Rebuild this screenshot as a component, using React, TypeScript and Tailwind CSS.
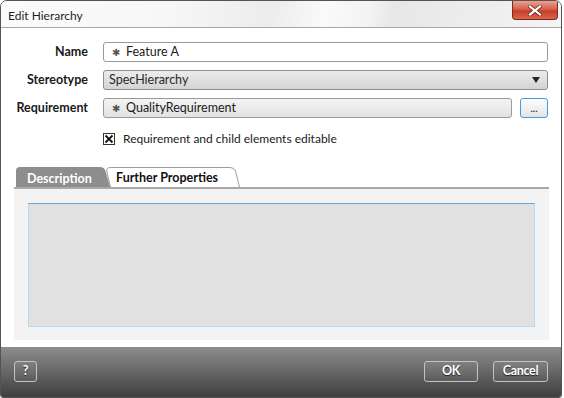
import React from "react";

const font = "font-['Lato','Liberation_Sans',sans-serif]";

function FieldLabel({ children }: { children: React.ReactNode }) {
  return (
    <div className="flex h-[20px] items-center justify-end text-[12.5px] font-bold text-[#1a1a1a]">
      {children}
    </div>
  );
}

function Star() {
  return <span className="mr-[6px] text-[10px] leading-none text-[#555]">✱</span>;
}

function TabShape({ kind }: { kind: "active" | "inactive" }) {
  if (kind === "active") {
    return (
      <svg className="absolute inset-0" width="94" height="20" viewBox="0 0 94 20">
        <path d="M0 20 V4 Q0 0 4 0 H84 Q88 0 89.5 4 L94 20 Z" fill="#8d8d8d" />
      </svg>
    );
  }
  return (
    <svg className="absolute inset-0" width="134" height="20" viewBox="0 0 134 20">
      <path d="M4.5 20 L0.8 4 Q0.5 0.5 4.5 0.5 H124 Q128 0.5 129.5 4 L133.5 20 Z" fill="#ffffff" />
      <path d="M4.5 20 L0.8 4 Q0.5 0.5 4.5 0.5 H124 Q128 0.5 129.5 4 L133.5 20" fill="none" stroke="#9d9d9d" />
    </svg>
  );
}

function FooterButton({ children, className }: { children: React.ReactNode; className?: string }) {
  return (
    <button
      className={`flex h-[21px] items-center justify-center rounded-[3px] border border-[#c4c4c4] bg-[linear-gradient(#ffffff14,#ffffff05)] text-[12.5px] font-bold tracking-[-0.3px] text-white [text-shadow:0_1px_1px_#222] ${className ?? ""}`}
    >
      {children}
    </button>
  );
}

export default function App() {
  return (
    <div className={`h-[398px] w-[564px] bg-white ${font}`}>
      <div className="flex h-[398px] w-[562px] flex-col overflow-hidden rounded-t-[7px] rounded-b-[3px] border border-[#545454] bg-white">
        {/* title bar */}
        <div className="flex h-[27px] shrink-0 items-start justify-between border-b border-[#a8a8a8] bg-[linear-gradient(100deg,#fbfbfb_0%,#f7f7f7_30%,#ececec_48%,#fafafa_58%,#f2f2f2_66%,#e7e7e7_70%,#f4f4f4_100%)]">
          <span className="pl-[7px] pt-[6px] text-[12px] text-[#1e1e1e]">Edit Hierarchy</span>
          <button className="mr-[3px] flex h-[19px] w-[46px] items-center justify-center rounded-b-[4px] border border-t-0 border-[#7b2a1e] bg-[linear-gradient(#e9a191_0%,#d7614b_45%,#c43f27_55%,#d9654c_100%)]">
            <svg width="14" height="11" viewBox="0 0 14 11">
              <path d="M2 1.5 L12 9.5 M12 1.5 L2 9.5" stroke="#6b2a20" strokeWidth="3.6" strokeLinecap="square" />
              <path d="M2 1.5 L12 9.5 M12 1.5 L2 9.5" stroke="#ffffff" strokeWidth="2.2" strokeLinecap="square" />
            </svg>
          </button>
        </div>

        {/* body */}
        <div className="flex shrink-0 flex-col pt-[14px]">
          <div className="grid grid-cols-[87px_1fr] gap-x-[15px] gap-y-[8px] pr-[13px]">
            <FieldLabel>Name</FieldLabel>
            <div className="flex h-[20px] items-center rounded-[3px] border border-[#9a9a9a] bg-white pl-[8px] text-[12.5px] text-[#1a1a1a]">
              <Star />
              Feature A
            </div>

            <FieldLabel>Stereotype</FieldLabel>
            <div className="flex h-[20px] items-center justify-between rounded-[3px] border border-[#8e8e8e] bg-[linear-gradient(#ececec,#d4d4d4)] pl-[5px] pr-[7px] text-[12.5px] text-[#2a2a2a]">
              SpecHierarchy
              <svg width="8" height="6" viewBox="0 0 8 6">
                <path d="M0 0 H8 L4 6 Z" fill="#262626" />
              </svg>
            </div>

            <FieldLabel>Requirement</FieldLabel>
            <div className="flex h-[20px] gap-[8px]">
              <div className="flex flex-1 items-center rounded-[3px] border border-[#9a9a9a] bg-[linear-gradient(#f4f4f4,#e2e2e2)] pl-[8px] text-[12.5px] text-[#1a1a1a]">
                <Star />
                QualityRequirement
              </div>
              <button className="flex h-[20px] w-[28px] items-end justify-center rounded-[3px] border border-[#3b9ced] bg-[linear-gradient(#fdfdfd,#e3e3e3)] pb-[4px] text-[10px] font-bold leading-none text-[#333]">
                ...
              </button>
            </div>

            <div />
            <div className="mt-[4px] flex items-center gap-[8px] text-[12px] text-[#1a1a1a]">
              <span className="flex h-[12px] w-[12px] items-center justify-center border border-[#333] bg-white">
                <svg width="10" height="10" viewBox="0 0 10 10">
                  <path d="M1.5 1.5 L8.5 8.5 M8.5 1.5 L1.5 8.5" stroke="#111" strokeWidth="1.8" />
                </svg>
              </span>
              Requirement and child elements editable
            </div>
          </div>

          {/* tabs */}
          <div className="mt-[19px] flex h-[20px] pl-[15px]">
            <div className="relative h-[20px] w-[94px]">
              <TabShape kind="active" />
              <span className="relative block pl-[11px] pt-[3px] text-[12.5px] font-bold text-white">Description</span>
            </div>
            <div className="relative -ml-[4px] h-[20px] w-[134px]">
              <TabShape kind="inactive" />
              <span className="relative block pl-[10px] pt-[2px] text-[12.5px] font-bold text-[#111]">Further Properties</span>
            </div>
          </div>
          <div className="mb-[7px] ml-[13px] mr-[12px] h-[153px] border-t-2 border-[#a9a9a9] bg-[#f3f3f3] px-[14px] pb-[13px] pt-[14px]">
            <div className="h-full border border-[#b5daf2] border-t-[#6aa6da] bg-[#e1e1e1]" />
          </div>
        </div>

        {/* footer */}
        <div className="flex flex-1 items-start justify-between bg-[linear-gradient(#8d8d8d,#3f3f3f)] px-[13px] pt-[14px]">
          <FooterButton className="w-[23px]">?</FooterButton>
          <div className="flex gap-[15px]">
            <FooterButton className="w-[54px]">OK</FooterButton>
            <FooterButton className="w-[55px]">Cancel</FooterButton>
          </div>
        </div>
      </div>
    </div>
  );
}
